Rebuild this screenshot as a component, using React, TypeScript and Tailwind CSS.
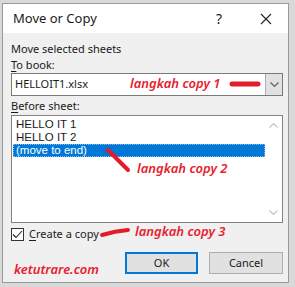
const notes = [
  { text: "langkah copy 1", cls: "left-[130px] top-[75px]" },
  { text: "langkah copy 2", cls: "left-[137px] top-[160px]" },
  { text: "langkah copy 3", cls: "left-[135px] top-[223px]" },
  { text: "ketutrare.com", cls: "left-[14px] top-[261px]" },
];

function Chevron({ up = false }: { up?: boolean }) {
  return (
    <svg width="9" height="6" viewBox="0 0 9 6" className={up ? "rotate-180" : ""}>
      <path d="M0.5 0.5 L4.5 4.5 L8.5 0.5" fill="none" stroke="currentColor" strokeWidth="1.2" />
    </svg>
  );
}

export default function App() {
  return (
    <div
      className="relative w-[295px] h-[287px] overflow-hidden bg-[#d9d9d9] pl-[2px] pt-[3px]"
      style={{ fontFamily: '"Noto Sans", "Open Sans", sans-serif' }}
    >
      {/* dialog */}
      <div className="w-[287px] h-[280px] bg-[#f0f0f0] border border-[#9a9a9a] flex flex-col text-[11px] text-[#1a1a1a]">
        {/* title bar */}
        <div className="h-[29px] bg-white flex items-center pl-[10px] text-[13px]">
          <span className="flex-1">Move or Copy</span>
          <span className="w-[14px] text-[14px] mr-[30px]">?</span>
          <svg width="12" height="12" viewBox="0 0 12 12" className="mr-[16px]">
            <path d="M1 1 L11 11 M11 1 L1 11" stroke="#222" strokeWidth="1.1" />
          </svg>
        </div>

        <div className="flex flex-col pl-[8px] pr-[5px] pt-[8px]">
          <p className="leading-[16px]">Move selected sheets</p>
          <p className="leading-[16px]">
            <span className="underline underline-offset-2">T</span>o book:
          </p>

          {/* combo */}
          <div className="h-[23px] bg-white border border-[#7a7a7a] flex items-center">
            <span className="flex-1 pl-[3px]">HELLOIT1.xlsx</span>
            <div className="w-[17px] h-full bg-[#e1e1e1] border-l border-[#adadad] flex items-center justify-center text-[#606060]">
              <Chevron />
            </div>
          </div>

          <p className="leading-[16px] mt-[2px]">
            <span className="underline underline-offset-2">B</span>efore sheet:
          </p>

          {/* list */}
          <div className="mt-[1px] h-[108px] bg-white border border-[#828282] flex">
            <div className="flex-1 pt-[2px] pl-[1px] font-['Liberation_Sans',sans-serif] text-[11.5px]">
              <div className="h-[13px] leading-[13px] pl-[3px]">HELLO IT 1</div>
              <div className="h-[13px] leading-[13px] pl-[3px]">HELLO IT 2</div>
              <div className="h-[13px] leading-[11px] pl-[2px] bg-[#0078d7] text-white border border-dotted border-[#8ab8e8]">
                (move to end)
              </div>
            </div>
            <div className="w-[17px] flex flex-col justify-between items-center py-[6px] text-[#c4c4c4]">
              <Chevron up />
              <Chevron />
            </div>
          </div>

          {/* checkbox */}
          <div className="mt-[4px] flex items-center h-[14px]">
            <div className="w-[13px] h-[13px] border border-[#333] bg-white flex items-center justify-center">
              <svg width="11" height="9" viewBox="0 0 11 9">
                <path d="M1 4.5 L4 7.5 L10 1" fill="none" stroke="#222" strokeWidth="1.1" />
              </svg>
            </div>
            <span className="ml-[5px]">
              <span className="underline underline-offset-2">C</span>reate a copy
            </span>
          </div>

          {/* buttons */}
          <div className="mt-[11px] flex justify-end gap-[11px]">
            <button className="w-[73px] h-[22px] bg-[#e1e1e1] border-2 border-[#0078d7] text-[11px]">OK</button>
            <button className="w-[74px] h-[22px] bg-[#e1e1e1] border border-[#adadad] text-[11px]">Cancel</button>
          </div>
        </div>
      </div>

      {/* annotations */}
      {notes.map((n) => (
        <span
          key={n.text}
          className={`absolute ${n.cls} text-[13px] leading-[16px] italic font-semibold text-[#e8202e]`}
        >
          {n.text}
        </span>
      ))}
      <svg className="absolute left-0 top-0" width="295" height="287">
        <path d="M232 84 L258 84" stroke="#e31c2a" strokeWidth="5" strokeLinecap="round" />
        <path d="M108 150 L128 170" stroke="#e31c2a" strokeWidth="4" strokeLinecap="round" />
        <path d="M102 235 Q115 231 128 230" fill="none" stroke="#e31c2a" strokeWidth="4" strokeLinecap="round" />
      </svg>
    </div>
  );
}
